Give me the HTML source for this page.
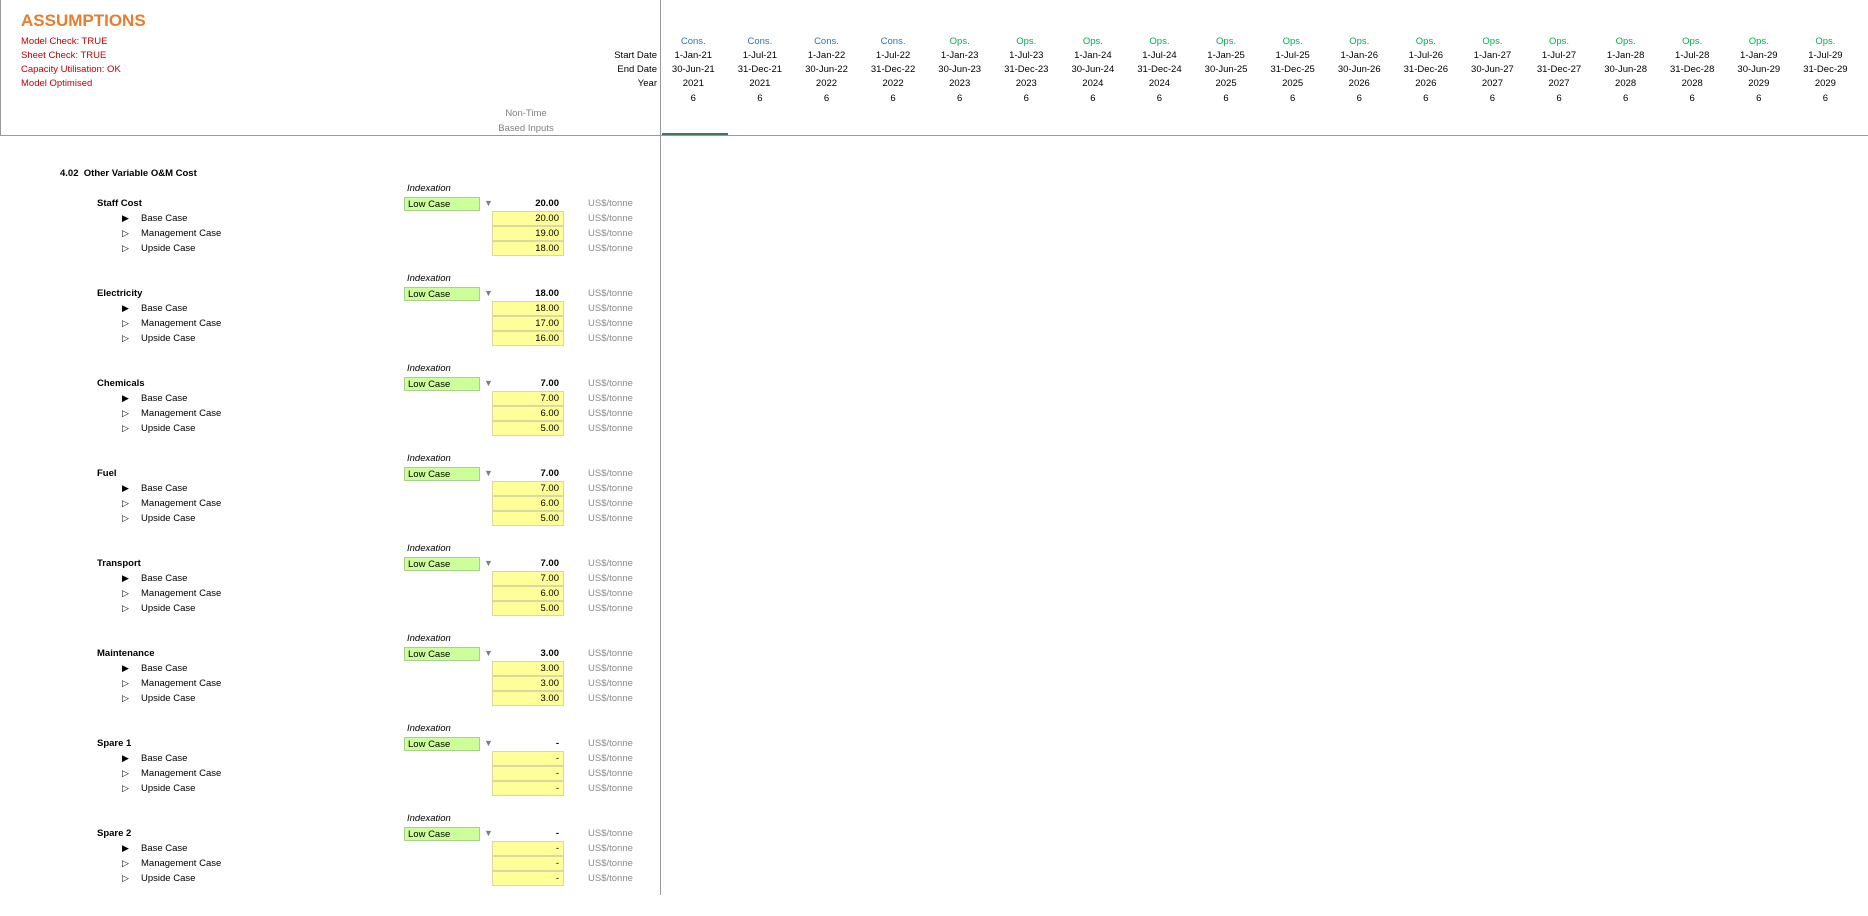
<!DOCTYPE html>
<html><head><meta charset="utf-8"><style>
*{margin:0;padding:0;box-sizing:border-box}
body{width:1868px;height:895px;background:#fff;position:relative;overflow:hidden;font-family:"Liberation Sans",Arial,sans-serif;font-size:9.5px;color:#000}
.a{position:absolute;white-space:nowrap;line-height:15px}
.red{color:#c00000}
.hr{position:absolute;left:0;top:135px;width:1868px;height:1px;background:#9a9a9a}
.vr{position:absolute;left:660px;top:0;width:1px;height:895px;background:#9a9a9a}
.lv{position:absolute;left:0;top:0;width:1px;height:135px;background:#9a9a9a}
.row{position:absolute;left:660px;display:flex;line-height:15px}
.row div{width:66.6px;text-align:center;white-space:nowrap}
.b{color:#2e75b6}.g{color:#00b050}
.blk{position:absolute;left:0;width:660px;height:90px}
.ix{position:absolute;left:407px;top:-15px;font-style:italic;line-height:15px}
.nm{position:absolute;left:97px;top:0;font-weight:bold;line-height:15px}
.gb{position:absolute;left:404px;top:1px;width:76px;height:14px;background:#ccff99;border:1px solid #a9d18e;line-height:13px;padding-left:3px}
.tri{position:absolute;left:484px;top:0;line-height:15px;color:#808080;font-size:9px}
.tv{position:absolute;right:101px;top:0;font-weight:bold;line-height:15px}
.u{position:absolute;left:588px;color:#8c8c8c;line-height:15px}
.bl{position:absolute;left:122px;line-height:15px;font-size:9px}
.lb{position:absolute;left:141px;line-height:15px}
.yb{position:absolute;left:492px;width:72px;height:15px;background:#ffff99;border:1px solid #d9d9a0;text-align:right;padding-right:4px;line-height:13px}
</style></head><body>
<div class="lv"></div><div class="hr"></div><div class="vr"></div>
<div style="position:absolute;left:662px;top:133px;width:66px;height:2px;background:#3c7a5a"></div>
<div class="a" style="left:21px;top:10px;font-size:17px;line-height:22px;font-weight:bold;color:#e87d2f">ASSUMPTIONS</div>
<div class="a red" style="left:21px;top:34px">Model Check: TRUE</div>
<div class="a red" style="left:21px;top:48px">Sheet Check: TRUE</div>
<div class="a red" style="left:21px;top:62px">Capacity Utilisation: OK</div>
<div class="a red" style="left:21px;top:76px">Model Optimised</div>
<div class="a" style="left:560px;width:97px;text-align:right;top:48px">Start Date</div>
<div class="a" style="left:560px;width:97px;text-align:right;top:62px">End Date</div>
<div class="a" style="left:560px;width:97px;text-align:right;top:76px">Year</div>
<div class="a" style="left:470px;width:112px;text-align:center;top:106px;color:#808080">Non-Time</div>
<div class="a" style="left:470px;width:112px;text-align:center;top:121px;color:#808080">Based Inputs</div>

<div class="row" style="top:34px"><div class="b">Cons.</div><div class="b">Cons.</div><div class="b">Cons.</div><div class="b">Cons.</div><div class="g">Ops.</div><div class="g">Ops.</div><div class="g">Ops.</div><div class="g">Ops.</div><div class="g">Ops.</div><div class="g">Ops.</div><div class="g">Ops.</div><div class="g">Ops.</div><div class="g">Ops.</div><div class="g">Ops.</div><div class="g">Ops.</div><div class="g">Ops.</div><div class="g">Ops.</div><div class="g">Ops.</div></div>
<div class="row" style="top:48px"><div>1-Jan-21</div><div>1-Jul-21</div><div>1-Jan-22</div><div>1-Jul-22</div><div>1-Jan-23</div><div>1-Jul-23</div><div>1-Jan-24</div><div>1-Jul-24</div><div>1-Jan-25</div><div>1-Jul-25</div><div>1-Jan-26</div><div>1-Jul-26</div><div>1-Jan-27</div><div>1-Jul-27</div><div>1-Jan-28</div><div>1-Jul-28</div><div>1-Jan-29</div><div>1-Jul-29</div></div>
<div class="row" style="top:62px"><div>30-Jun-21</div><div>31-Dec-21</div><div>30-Jun-22</div><div>31-Dec-22</div><div>30-Jun-23</div><div>31-Dec-23</div><div>30-Jun-24</div><div>31-Dec-24</div><div>30-Jun-25</div><div>31-Dec-25</div><div>30-Jun-26</div><div>31-Dec-26</div><div>30-Jun-27</div><div>31-Dec-27</div><div>30-Jun-28</div><div>31-Dec-28</div><div>30-Jun-29</div><div>31-Dec-29</div></div>
<div class="row" style="top:76px"><div>2021</div><div>2021</div><div>2022</div><div>2022</div><div>2023</div><div>2023</div><div>2024</div><div>2024</div><div>2025</div><div>2025</div><div>2026</div><div>2026</div><div>2027</div><div>2027</div><div>2028</div><div>2028</div><div>2029</div><div>2029</div></div>
<div class="row" style="top:91px"><div>6</div><div>6</div><div>6</div><div>6</div><div>6</div><div>6</div><div>6</div><div>6</div><div>6</div><div>6</div><div>6</div><div>6</div><div>6</div><div>6</div><div>6</div><div>6</div><div>6</div><div>6</div></div>

<div class="a" style="left:60px;top:166px;font-weight:bold">4.02&nbsp; Other Variable O&amp;M Cost</div>

<div class="blk" style="top:196px"><div class="ix">Indexation</div><div class="nm">Staff Cost</div><div class="gb">Low Case</div><div class="tri">▼</div><div class="tv">20.00</div><div class="u" style="top:0">US$/tonne</div>
<div class="bl" style="top:15px">▶</div><div class="lb" style="top:15px">Base Case</div><div class="yb" style="top:15px">20.00</div><div class="u" style="top:15px">US$/tonne</div>
<div class="bl" style="top:30px">▷</div><div class="lb" style="top:30px">Management Case</div><div class="yb" style="top:30px">19.00</div><div class="u" style="top:30px">US$/tonne</div>
<div class="bl" style="top:45px">▷</div><div class="lb" style="top:45px">Upside Case</div><div class="yb" style="top:45px">18.00</div><div class="u" style="top:45px">US$/tonne</div></div>

<div class="blk" style="top:286px"><div class="ix">Indexation</div><div class="nm">Electricity</div><div class="gb">Low Case</div><div class="tri">▼</div><div class="tv">18.00</div><div class="u" style="top:0">US$/tonne</div>
<div class="bl" style="top:15px">▶</div><div class="lb" style="top:15px">Base Case</div><div class="yb" style="top:15px">18.00</div><div class="u" style="top:15px">US$/tonne</div>
<div class="bl" style="top:30px">▷</div><div class="lb" style="top:30px">Management Case</div><div class="yb" style="top:30px">17.00</div><div class="u" style="top:30px">US$/tonne</div>
<div class="bl" style="top:45px">▷</div><div class="lb" style="top:45px">Upside Case</div><div class="yb" style="top:45px">16.00</div><div class="u" style="top:45px">US$/tonne</div></div>

<div class="blk" style="top:376px"><div class="ix">Indexation</div><div class="nm">Chemicals</div><div class="gb">Low Case</div><div class="tri">▼</div><div class="tv">7.00</div><div class="u" style="top:0">US$/tonne</div>
<div class="bl" style="top:15px">▶</div><div class="lb" style="top:15px">Base Case</div><div class="yb" style="top:15px">7.00</div><div class="u" style="top:15px">US$/tonne</div>
<div class="bl" style="top:30px">▷</div><div class="lb" style="top:30px">Management Case</div><div class="yb" style="top:30px">6.00</div><div class="u" style="top:30px">US$/tonne</div>
<div class="bl" style="top:45px">▷</div><div class="lb" style="top:45px">Upside Case</div><div class="yb" style="top:45px">5.00</div><div class="u" style="top:45px">US$/tonne</div></div>

<div class="blk" style="top:466px"><div class="ix">Indexation</div><div class="nm">Fuel</div><div class="gb">Low Case</div><div class="tri">▼</div><div class="tv">7.00</div><div class="u" style="top:0">US$/tonne</div>
<div class="bl" style="top:15px">▶</div><div class="lb" style="top:15px">Base Case</div><div class="yb" style="top:15px">7.00</div><div class="u" style="top:15px">US$/tonne</div>
<div class="bl" style="top:30px">▷</div><div class="lb" style="top:30px">Management Case</div><div class="yb" style="top:30px">6.00</div><div class="u" style="top:30px">US$/tonne</div>
<div class="bl" style="top:45px">▷</div><div class="lb" style="top:45px">Upside Case</div><div class="yb" style="top:45px">5.00</div><div class="u" style="top:45px">US$/tonne</div></div>

<div class="blk" style="top:556px"><div class="ix">Indexation</div><div class="nm">Transport</div><div class="gb">Low Case</div><div class="tri">▼</div><div class="tv">7.00</div><div class="u" style="top:0">US$/tonne</div>
<div class="bl" style="top:15px">▶</div><div class="lb" style="top:15px">Base Case</div><div class="yb" style="top:15px">7.00</div><div class="u" style="top:15px">US$/tonne</div>
<div class="bl" style="top:30px">▷</div><div class="lb" style="top:30px">Management Case</div><div class="yb" style="top:30px">6.00</div><div class="u" style="top:30px">US$/tonne</div>
<div class="bl" style="top:45px">▷</div><div class="lb" style="top:45px">Upside Case</div><div class="yb" style="top:45px">5.00</div><div class="u" style="top:45px">US$/tonne</div></div>

<div class="blk" style="top:646px"><div class="ix">Indexation</div><div class="nm">Maintenance</div><div class="gb">Low Case</div><div class="tri">▼</div><div class="tv">3.00</div><div class="u" style="top:0">US$/tonne</div>
<div class="bl" style="top:15px">▶</div><div class="lb" style="top:15px">Base Case</div><div class="yb" style="top:15px">3.00</div><div class="u" style="top:15px">US$/tonne</div>
<div class="bl" style="top:30px">▷</div><div class="lb" style="top:30px">Management Case</div><div class="yb" style="top:30px">3.00</div><div class="u" style="top:30px">US$/tonne</div>
<div class="bl" style="top:45px">▷</div><div class="lb" style="top:45px">Upside Case</div><div class="yb" style="top:45px">3.00</div><div class="u" style="top:45px">US$/tonne</div></div>

<div class="blk" style="top:736px"><div class="ix">Indexation</div><div class="nm">Spare 1</div><div class="gb">Low Case</div><div class="tri">▼</div><div class="tv">-</div><div class="u" style="top:0">US$/tonne</div>
<div class="bl" style="top:15px">▶</div><div class="lb" style="top:15px">Base Case</div><div class="yb" style="top:15px">-</div><div class="u" style="top:15px">US$/tonne</div>
<div class="bl" style="top:30px">▷</div><div class="lb" style="top:30px">Management Case</div><div class="yb" style="top:30px">-</div><div class="u" style="top:30px">US$/tonne</div>
<div class="bl" style="top:45px">▷</div><div class="lb" style="top:45px">Upside Case</div><div class="yb" style="top:45px">-</div><div class="u" style="top:45px">US$/tonne</div></div>

<div class="blk" style="top:826px"><div class="ix">Indexation</div><div class="nm">Spare 2</div><div class="gb">Low Case</div><div class="tri">▼</div><div class="tv">-</div><div class="u" style="top:0">US$/tonne</div>
<div class="bl" style="top:15px">▶</div><div class="lb" style="top:15px">Base Case</div><div class="yb" style="top:15px">-</div><div class="u" style="top:15px">US$/tonne</div>
<div class="bl" style="top:30px">▷</div><div class="lb" style="top:30px">Management Case</div><div class="yb" style="top:30px">-</div><div class="u" style="top:30px">US$/tonne</div>
<div class="bl" style="top:45px">▷</div><div class="lb" style="top:45px">Upside Case</div><div class="yb" style="top:45px">-</div><div class="u" style="top:45px">US$/tonne</div></div>
</body></html>
